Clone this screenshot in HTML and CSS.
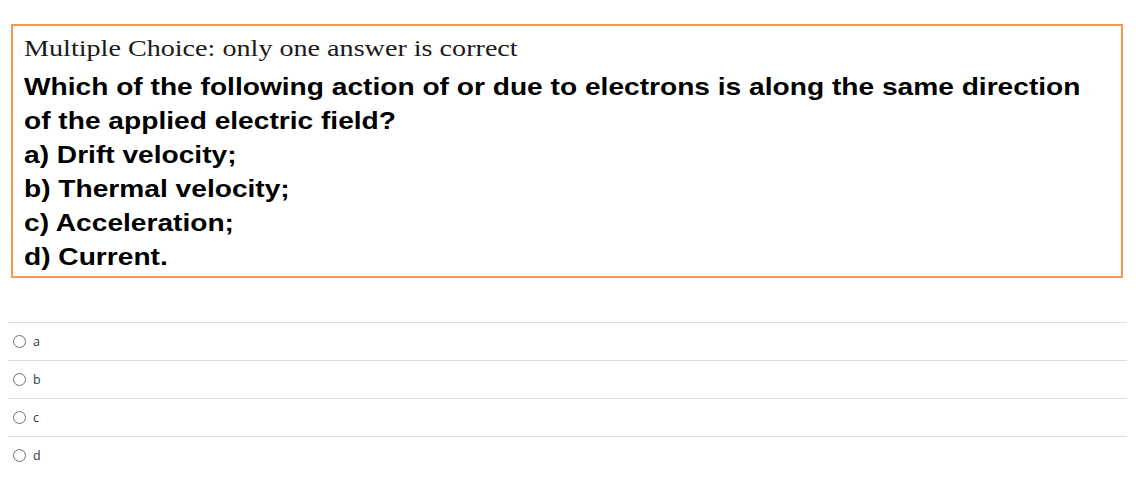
FILE: index.html
```html
<!DOCTYPE html>
<html>
<head>
<meta charset="utf-8">
<link rel="stylesheet" href="styles.css">
</head>
<body>
<div class="page">
  <div class="question">
    <div class="stretch">
      <div class="title">Multiple Choice: only one answer is correct</div>
      <div class="stem">
        <div>Which of the following action of or due to electrons is along the same direction<br>of the applied electric field?</div>
        <div>a) Drift velocity;</div>
        <div>b) Thermal velocity;</div>
        <div>c) Acceleration;</div>
        <div>d) Current.</div>
      </div>
    </div>
  </div>
  <div class="answers">
    <label class="answer"><span class="radio"></span><span class="label">a</span></label>
    <label class="answer"><span class="radio"></span><span class="label">b</span></label>
    <label class="answer"><span class="radio"></span><span class="label">c</span></label>
    <label class="answer"><span class="radio"></span><span class="label">d</span></label>
  </div>
</div>
</body>
</html>
```
FILE: styles.css
```css
html, body {
  margin: 0;
  padding: 0;
  background: #ffffff;
}
.page {
  padding: 24px 9px 0 8px;
}
.question {
  margin: 0 4px 0 3px;
  border: 2px solid #f7964a;
  padding: 0 12px 2px 11px;
  color: #000;
  overflow: hidden;
}
.stretch {
  transform: scaleX(1.172);
  transform-origin: left top;
  white-space: nowrap;
}
.title {
  font-family: "Liberation Serif", serif;
  font-size: 24px;
  line-height: 44px;
  color: #1a1a1a;
}
.stem {
  font-family: "Liberation Sans", Arial, sans-serif;
  font-weight: bold;
  font-size: 24px;
  line-height: 34px;
  color: #000;
}
.answers {
  margin-top: 44px;
  display: flex;
  flex-direction: column;
}
.answer {
  display: flex;
  align-items: center;
  gap: 7px;
  height: 37px;
  border-top: 1px solid #dddddd;
  padding-left: 5px;
  font-family: "Open Sans", sans-serif;
  font-size: 12.5px;
  color: #2d3b45;
}
.radio {
  width: 11px;
  height: 11px;
  border: 1px solid #6f6f6f;
  border-radius: 50%;
  background: #fff;
  flex: none;
}
.label {
  line-height: 16px;
}
```
